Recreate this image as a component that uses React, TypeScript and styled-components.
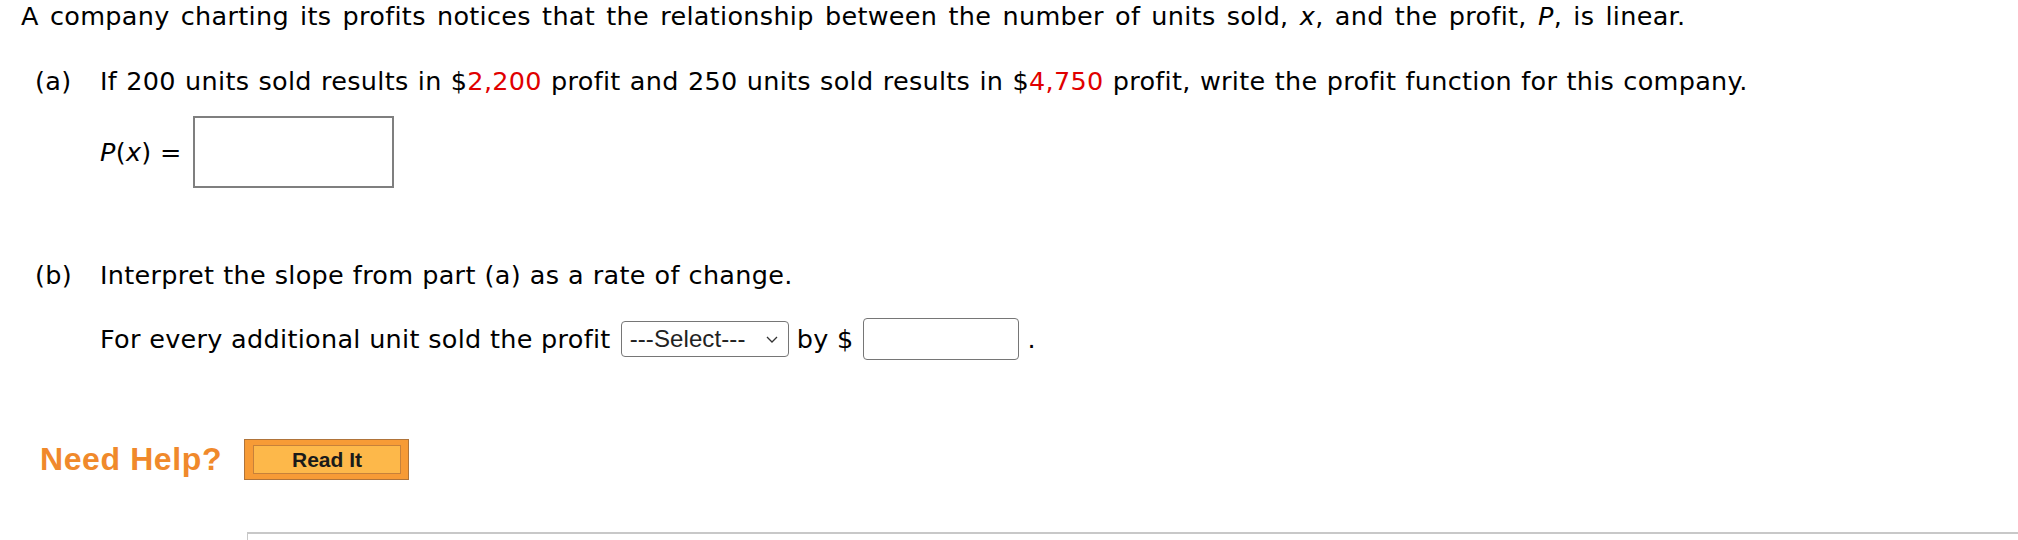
import React from 'react';
import styled, { createGlobalStyle } from 'styled-components';

const GlobalStyle = createGlobalStyle`
  html, body {
    margin: 0;
    padding: 0;
    background: #fff;
  }
  body {
    font-family: 'DejaVu Sans', Verdana, sans-serif;
    color: #000;
  }
`;

const Page = styled.div`
  width: 2018px;
  height: 540px;
  overflow: hidden;
  padding: 0 0 0 21px;
  box-sizing: border-box;
  font-size: 25.5px;
  letter-spacing: 0.3px;
`;

const Intro = styled.p`
  margin: 0;
  padding-top: 1px;
  line-height: 30px;
  word-spacing: 2.8px;
`;

const Part = styled.div<{ $top: number }>`
  display: grid;
  grid-template-columns: 65px 1fr;
  margin-left: 14px;
  margin-top: ${({ $top }) => $top}px;
`;

const PartLabel = styled.span`
  line-height: 30px;
`;

const PartBody = styled.div`
  display: flex;
  flex-direction: column;
`;

const Line = styled.div<{ $spread?: number }>`
  line-height: 30px;
  word-spacing: ${({ $spread }) => $spread ?? 0}px;
`;

const Red = styled.span`
  color: #e00000;
`;

const Var = styled.i`
  font-style: italic;
`;

const AnswerRow = styled.div<{ $top: number }>`
  display: flex;
  align-items: center;
  margin-top: ${({ $top }) => $top}px;
  gap: 8px;
`;

const MathLabel = styled.span`
  white-space: pre;
`;

const BigInput = styled.div`
  width: 197px;
  height: 68px;
  border: 2px solid #7f7f7f;
  box-sizing: content-box;
  margin-left: 3px;
`;

const SelectBox = styled.div`
  display: flex;
  align-items: center;
  justify-content: space-between;
  width: 168px;
  height: 36px;
  box-sizing: border-box;
  border: 1px solid #767676;
  border-radius: 4px;
  padding: 0 10px 0 8px;
  font-family: 'Liberation Sans', Arial, sans-serif;
  font-size: 24px;
  letter-spacing: 0.1px;
  color: #222;
  margin-left: 2px;
`;

const SmallInput = styled.div`
  width: 156px;
  height: 42px;
  box-sizing: border-box;
  border: 1px solid #767676;
  border-radius: 4px;
  margin-left: 2px;
`;

const HelpRow = styled.div`
  display: flex;
  align-items: center;
  gap: 22px;
  margin-top: 79px;
  margin-left: 19px;
`;

const HelpText = styled.span`
  font-family: 'Liberation Sans', Arial, sans-serif;
  font-weight: bold;
  font-size: 32px;
  letter-spacing: 0.6px;
  color: #f0892b;
`;

const ReadButton = styled.div`
  width: 165px;
  height: 41px;
  box-sizing: border-box;
  background: #f79b36;
  border: 1px solid #b0743a;
  padding: 5px 7px 5px 8px;
  display: flex;
`;

const ReadInner = styled.div`
  flex: 1;
  display: flex;
  align-items: center;
  justify-content: center;
  background: #fdb84a;
  border: 1px solid #c7813a;
  font-family: 'Liberation Sans', Arial, sans-serif;
  font-weight: bold;
  font-size: 21px;
  letter-spacing: 0;
  color: #1a1a1a;
`;

const Panel = styled.div`
  margin-top: 52px;
  margin-left: 226px;
  height: 40px;
  border-top: 2px solid #c8c8c8;
  border-left: 1px solid #c8c8c8;
`;

const Chevron = () => (
  <svg width="12" height="9" viewBox="0 0 12 9">
    <path d="M1 2 L6 7 L11 2" fill="none" stroke="#333" strokeWidth="1.3" />
  </svg>
);

export default function App() {
  return (
    <>
      <GlobalStyle />
      <Page>
        <Intro>
          A company charting its profits notices that the relationship between the number of units sold, <Var>x</Var>, and the profit, <Var>P</Var>, is linear.
        </Intro>

        <Part $top={35}>
          <PartLabel>(a)</PartLabel>
          <PartBody>
            <Line $spread={0.8}>
              If 200 units sold results in $<Red>2,200</Red> profit and 250 units sold results in $<Red>4,750</Red> profit, write the profit function for this company.
            </Line>
            <AnswerRow $top={20}>
              <MathLabel><Var>P</Var>(<Var>x</Var>) =</MathLabel>
              <BigInput />
            </AnswerRow>
          </PartBody>
        </Part>

        <Part $top={72}>
          <PartLabel>(b)</PartLabel>
          <PartBody>
            <Line $spread={0.4}>Interpret the slope from part (a) as a rate of change.</Line>
            <AnswerRow $top={28}>
              <span>For every additional unit sold the profit</span>
              <SelectBox>
                <span>---Select---</span>
                <Chevron />
              </SelectBox>
              <span>by $</span>
              <SmallInput />
              <span>.</span>
            </AnswerRow>
          </PartBody>
        </Part>

        <HelpRow>
          <HelpText>Need Help?</HelpText>
          <ReadButton>
            <ReadInner>Read It</ReadInner>
          </ReadButton>
        </HelpRow>

        <Panel />
      </Page>
    </>
  );
}
